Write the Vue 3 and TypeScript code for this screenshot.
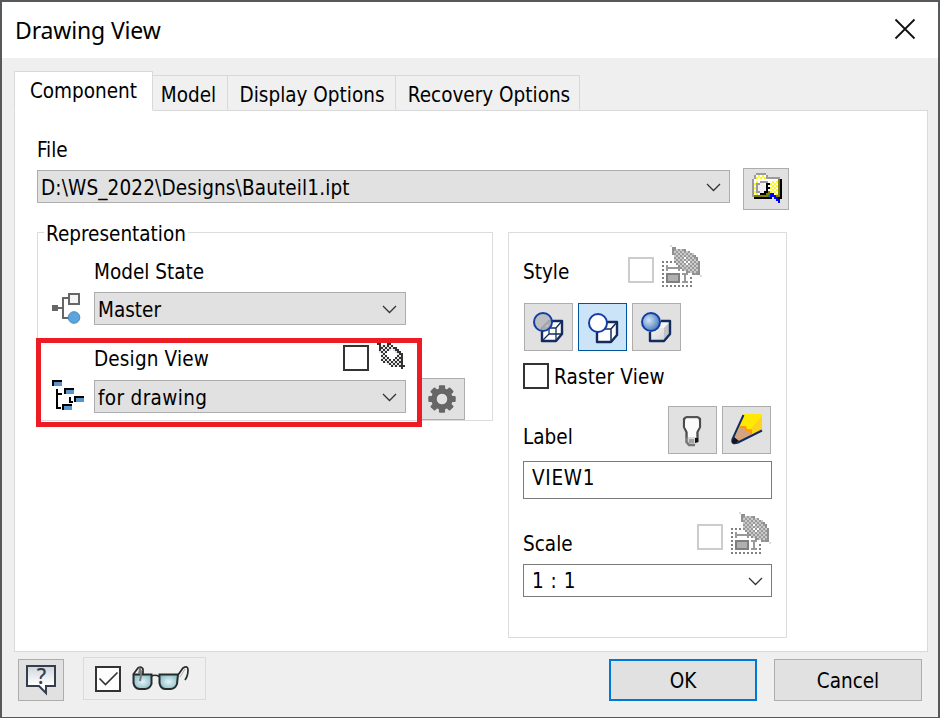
<script setup lang="ts">
import { ref, h, type FunctionalComponent } from 'vue'

const palette: Record<string, string> = {
  g: '#9b9b9b', w: '#ffffff', y: '#ffff00', o: '#808000', k: '#000000',
  b: '#0000ff', t: '#008080', l: '#efefef', d: '#333333', s: '#dddddd', m: '#8f8f8f',
}

// 'x' cells alternate between the two dither colours.
const folderMap = [
  '..ggggg........',
  '.gxxxxxg.......',
  '.gxxxxxggggggg.',
  'gwwwwwwwwwwwwok',
  'gwxwggggwxxxxok',
  'gxggllwkkxxxxok',
  'gwgllllkwxxxxok',
  'gxgllllkkxxxxok',
  'gwgllllkwxxxxok',
  'gxggllkkoxxxxok',
  'gwxwkkkoobbxxok',
  'goooooootbbbook',
  '.kkkkkkkkk.bbkk',
  '............bb.',
  '.............b.',
]

const leafMap = [
  'dd...dd.......',
  '.dxxxxxd......',
  '.dxxxxxxxd....',
  '.xxxxxxwxxd...',
  '.xxxxwwwwxxd..',
  '..xxwwwwwwxxd.',
  '..xxxwwwwwxxd.',
  '..xxxxwwwxxxd.',
  '..xxxxxwxxxxd.',
  '...xxxxxxxxxd.',
  '.....xxxxxxxd.',
  '.......dxdxxdd',
  '............d.',
]

const grayLeafMap = [
  's...............',
  '.mm.............',
  '.mxxxxxm........',
  '.mxxxxxxxx......',
  '.mxxxxxxxxxx....',
  '..xxxxxxxxxxm...',
  '..xxxxxwxxxxxm..',
  '..xxxxxxxxxxxm..',
  '..mxxxxwxwxxxxm.',
  '...mxxxxwxxxxxm.',
  '....mxxxxxxxxxm.',
  '.....mxxxxxxxxm.',
  '......mxxxxxxxm.',
  '........mxxxxxm.',
  '...........mxmm.',
  '...............s',
]

const PixelArt: FunctionalComponent<{ map: string[]; dither: [string, string] }> = (props) =>
  h('g', { 'shape-rendering': 'crispEdges' },
    props.map.flatMap((row, y) =>
      [...row].map((c, x) => c === '.' ? null
        : h('rect', {
            x: x * 2, y: y * 2, width: 2, height: 2,
            fill: c === 'x' ? props.dither[(x + y) % 2] : palette[c],
          }))))
PixelArt.props = ['map', 'dither']

const folderDither: [string, string] = ['#ffff00', '#ffffff']
const leafDither: [string, string] = ['#333333', '#e4e4e4']
const grayLeafDither: [string, string] = ['#9a9a9a', '#cbcbcb']

const Chevron: FunctionalComponent = () =>
  h('svg', { width: 15, height: 9, viewBox: '0 0 15 9' },
    [h('path', { d: 'M1 1 L7.5 7.5 L14 1', fill: 'none', stroke: '#333', 'stroke-width': 1.3 })])

const OverrideIcon: FunctionalComponent = () =>
  h('svg', { width: 42, height: 44, viewBox: '0 0 42 44' }, [
    h('g', { fill: 'none', stroke: '#808080', 'stroke-width': 2, 'shape-rendering': 'crispEdges' }, [
      h('path', { d: 'M0 17 H14 M0 41 H32', 'stroke-dasharray': '2 2' }),
      h('path', { d: 'M1 20 V42 M29 32 V42', 'stroke-dasharray': '2 2' }),
      h('rect', { x: 5, y: 29, width: 12, height: 8, fill: '#b0b0b0' }),
      h('path', { d: 'M5 20 V26 M17 20 V26 M6 23 H16 M20 29 H26 M20 37 H26 M23 30 V36', stroke: '#999' }),
    ]),
    h('g', { transform: 'translate(8 0)' }, [h(PixelArt, { map: grayLeafMap, dither: grayLeafDither })]),
  ])

const tabs = ['Component', 'Model', 'Display Options', 'Recovery Options']
const active = ref(0)
const style = ref(1)
const previewOn = ref(true)
const rasterOn = ref(false)
const label = ref('VIEW1')
</script>

<template>
  <div class="dialog">
    <header class="titlebar">
      <h1>Drawing View</h1>
      <button class="close" aria-label="Close">
        <svg width="22" height="22" viewBox="0 0 22 22"><path d="M1.5 1.5 L20.5 20.5 M20.5 1.5 L1.5 20.5" stroke="#111" stroke-width="1.8" /></svg>
      </button>
    </header>

    <nav class="tabs">
      <button v-for="(t, i) in tabs" :key="t" :class="['tab', 'tab-' + i, { active: i === active }]" @click="active = i"><span>{{ t }}</span></button>
    </nav>

    <main class="panel">
      <div class="caption file-caption">File</div>
      <div class="file-row">
        <div class="combo file-combo"><span class="path">D:\WS_2022\Designs\Bauteil1.ipt</span><Chevron /></div>
        <button class="btn small">
          <svg class="folder" width="30" height="30" viewBox="0 0 30 30"><PixelArt :map="folderMap" :dither="folderDither" /></svg>
        </button>
      </div>

      <div class="groups">
        <section class="group representation">
          <div class="legend">Representation</div>
          <div class="caption state-caption">Model State</div>
          <div class="rep-row">
            <svg class="rep-icon" width="34" height="34" viewBox="0 0 34 34">
              <rect x="0" y="13" width="6" height="6" fill="#666" />
              <path d="M6 16 H11 M17 6 H11 V26 H17" fill="none" stroke="#666" stroke-width="2" />
              <rect x="17" y="2" width="10" height="10" fill="#f5f5f5" stroke="#666" stroke-width="2" />
              <circle cx="22" cy="25.500" r="5.800" fill="#5ba5dc" stroke="#4489bd" stroke-width="1" />
            </svg>
            <div class="combo rep-combo"><span>Master</span><Chevron /></div>
          </div>
          <div class="design-head">
            <span class="caption design-caption">Design View</span>
            <span class="check" />
            <svg class="leaf" width="28" height="26" viewBox="0 0 28 26"><PixelArt :map="leafMap" :dither="leafDither" /></svg>
          </div>
          <div class="rep-row design-row">
            <svg class="rep-icon tree" width="34" height="34" viewBox="0 0 34 34">
              <path d="M5 9 V28 H9 M5 14 H10 M18 17 V22 H21" fill="none" stroke="#000" stroke-width="2" />
              <g fill="#5b94cc">
                <rect x="1" y="2" width="9" height="4" /><rect x="13" y="10" width="9" height="4" />
                <rect x="23" y="18" width="9" height="4" /><rect x="11" y="26" width="9" height="4" />
              </g>
              <path d="M1 6 V1 H10 M13 14 V9 H22 M23 22 V17 H32 M11 30 V25 H20" fill="none" stroke="#000" stroke-width="2" />
            </svg>
            <div class="combo rep-combo"><span class="design-value">for drawing</span><Chevron /></div>
            <button class="btn small gear">
              <svg width="30" height="30" viewBox="-15 -15 30 30">
                <g fill="#666">
                  <rect v-for="n in 8" :key="n" x="-3.100" y="-13.700" width="6.200" height="7" rx="1" :transform="`rotate(${n * 45})`" />
                </g>
                <circle r="8" fill="#e1e1e1" stroke="#666" stroke-width="5.500" />
                <circle r="5" fill="#e1e1e1" />
              </svg>
            </button>
          </div>
          <div class="highlight" />
        </section>

        <section class="group view">
          <div class="view-row style-head">
            <span class="caption">Style</span>
            <span class="check disabled" />
            <OverrideIcon class="override" />
          </div>
          <div class="style-buttons">
            <button :class="['btn', 'tool', { selected: style === 0 }]" @click="style = 0">
              <svg width="47" height="46" viewBox="0 0 47 46" fill="none">
                <path d="M17 24 L24 17 H37 V30 L31 37 H17 Z" fill="#fff" stroke="#132b5e" stroke-width="2.400" stroke-linejoin="round" />
                <path d="M17 24 H31 V37 M31 24 L37 17 M24 17 V30 H37 M24 30 L17 37" stroke="#132b5e" stroke-width="1.300" />
                <circle cx="18" cy="18" r="9" fill="#b6b8ba" fill-opacity=".88" stroke="#143da6" stroke-width="2" />
              </svg>
            </button>
            <button :class="['btn', 'tool', { selected: style === 1 }]" @click="style = 1">
              <svg width="47" height="46" viewBox="0 0 47 46" fill="none">
                <path d="M18 25 L25 18 H38 V31 L32 38 H18 Z" fill="#fff" stroke="#132b5e" stroke-width="2.400" stroke-linejoin="round" />
                <path d="M18 25 H32 V38 M32 25 L38 18" stroke="#132b5e" stroke-width="1.500" />
                <circle cx="19" cy="19" r="9" fill="#fff" stroke="#143da6" stroke-width="2" />
              </svg>
            </button>
            <button :class="['btn', 'tool', { selected: style === 2 }]" @click="style = 2">
              <svg width="47" height="46" viewBox="0 0 47 46" fill="none">
                <defs>
                  <radialGradient id="ball" cx=".38" cy=".4" r=".65"><stop offset="0" stop-color="#d3e5f6" /><stop offset="1" stop-color="#4578b8" /></radialGradient>
                  <linearGradient id="face" x1="0" y1="0" x2="1" y2="1"><stop offset="0" stop-color="#fff" /><stop offset="1" stop-color="#ccc" /></linearGradient>
                </defs>
                <path d="M17 24 L24 17 H37 V30 L31 37 H17 Z" fill="url(#face)" />
                <path d="M17 24 L24 17 H37 L31 24 Z" fill="#f7f7f7" />
                <path d="M31 24 L37 18 V30 L31 36 Z" fill="#c0c3c7" />
                <path d="M17 28 V37 H31 L37 30 V17 H28" stroke="#132b5e" stroke-width="2.400" stroke-linejoin="round" />
                <circle cx="18" cy="18" r="9" fill="url(#ball)" stroke="#143da6" stroke-width="2" />
              </svg>
            </button>
          </div>
          <label class="raster" @click="rasterOn = !rasterOn">
            <span class="check"><svg v-if="rasterOn" width="22" height="22" viewBox="0 0 22 22"><path d="M3 11 L9 17 L20 5" fill="none" stroke="#333" stroke-width="1.800" /></svg></span>
            <span class="raster-text">Raster View</span>
          </label>
          <div class="label-row">
            <span class="caption">Label</span>
            <button class="btn tool">
              <svg width="47" height="46" viewBox="0 0 47 46">
                <path d="M17 9 H29 L32 12 V21 L29 25 V35 L27 38 H19 L16 34 V25 L14 21 V12 Z" fill="#d8d8d8" />
                <path d="M17 10 H29" fill="none" stroke="#555" stroke-width="2" />
                <path d="M17 10 L15 12 V20 L17.500 25 V31 M29 10 L31 12 V20 L28.500 25 V31" fill="none" stroke="#4c4c4c" stroke-width="2.200" />
                <path d="M17 12 H29 L30 15 V20 L27 25 V30 H19 V25 L16 20 V15 Z" fill="#fbfbfb" />
                <path d="M17.500 30 V35 L20 38 H26" fill="none" stroke="#777" stroke-width="2.500" />
                <path d="M26 31 H29.500 V35 L26 36 Z" fill="#111" />
                <path d="M20 32 H25 V36 H20 Z" fill="#a2a2a2" />
              </svg>
            </button>
            <button class="btn tool pencil">
              <svg width="47" height="46" viewBox="0 0 47 46">
                <path d="M21 7 L39 7 V23 L26 29 L15 22 Z" fill="#ffe900" />
                <path d="M39 9 V23 L27 28 L26 24 Z" fill="#ffd21f" />
                <path d="M16.500 20 L22 20 L24 23 L28 24 L28 28 L15 35 L11 31 Z" fill="#d6a37f" />
                <path d="M17 20 L22 20 L23.500 23 L28 23.500 V27" fill="none" stroke="#ff9b00" stroke-width="2" />
                <path d="M20.500 8 L9.500 32 Q8 38 15 35.500 L39 23.500" fill="none" stroke="#132b5e" stroke-width="2" />
                <path d="M11 30 L16 34 L11 36.500 L9 35 Z" fill="#151515" />
              </svg>
            </button>
          </div>
          <input v-model="label" class="name-input" />
          <div class="view-row scale-head">
            <span class="caption">Scale</span>
            <span class="check disabled" />
            <OverrideIcon class="override" />
          </div>
          <div class="combo scale-combo"><span>1 : 1</span><Chevron /></div>
        </section>
      </div>
    </main>

    <footer class="footer">
      <button class="btn small help">
        <svg width="34" height="40" viewBox="0 -3 34 40">
          <defs><linearGradient id="bubble" x1="0" y1="0" x2="0" y2="1"><stop offset="0" stop-color="#cfd4da" /><stop offset=".7" stop-color="#fff" /></linearGradient></defs>
          <path d="M3 3 H31 V23 H22 V30 L15 23 H3 Z" fill="url(#bubble)" stroke="#353e4c" stroke-width="2" />
          <text x="17.500" y="20.500" text-anchor="middle" class="question">?</text>
        </svg>
      </button>
      <div class="preview" @click="previewOn = !previewOn">
        <span class="check"><svg v-if="previewOn" width="22" height="22" viewBox="0 0 22 22"><path d="M2.500 10.500 L8.500 16.500 L20.500 4.500" fill="none" stroke="#333" stroke-width="1.600" /></svg></span>
        <svg class="glasses" width="60" height="28" viewBox="0 0 60 28">
          <defs><radialGradient id="lens"><stop offset="0" stop-color="#e4f5f7" /><stop offset="1" stop-color="#93c2ca" /></radialGradient></defs>
          <g fill="none" stroke="#262b2c" stroke-width="2">
            <path d="M2.500 9.500 H20.500 V19 Q18.500 24 14 24 H8.500 Q3.500 23.500 2.500 18 Z" fill="url(#lens)" />
            <path d="M28.500 9.500 H47 L46 19 Q44 24 39.500 24 H34 Q29.500 23.500 28.500 18 Z" fill="url(#lens)" />
            <path d="M20 11.500 Q24 9 28 11.500 M2.500 9 L7 3 Q10 1 12 4 V9 M47 10 L52 3 Q57 0 57 5 Q57 11 54 15" stroke-width="1.700" />
          </g>
          <path d="M8 9 L9 4 Q11 7 9 16" fill="none" stroke="#777" stroke-width="2" />
          <path d="M49 12 L54 4" stroke="#aaa" stroke-width="1" />
        </svg>
      </div>
      <button class="btn action ok"><span>OK</span></button>
      <button class="btn action cancel"><span>Cancel</span></button>
    </footer>
  </div>
</template>

<style>
body { margin: 0; overflow: hidden; }
</style>

<style scoped>
* { box-sizing: border-box; }
.dialog {
  display: flex; flex-direction: column; width: 940px; height: 718px;
  border: 2px solid #56595c; border-bottom-width: 1px; background: #efefef; color: #000;
  font-family: 'DejaVu Sans Condensed', 'DejaVu Sans', sans-serif; font-stretch: condensed;
  font-size: 20.5px; line-height: 26px; white-space: nowrap; letter-spacing: 0;
}
button, input { font: inherit; color: inherit; letter-spacing: inherit; margin: 0; padding: 0; border-radius: 0; }
svg { display: block; flex: none; }
.titlebar { display: flex; align-items: center; justify-content: space-between; height: 56px; padding: 0 22px 2px 13px; background: #fff; }
h1 { margin: 2px 0 0; font: 400 23px/30px 'Noto Sans', sans-serif; letter-spacing: -.15px; }
.close { border: 0; background: none; }
.tabs { display: flex; align-items: flex-end; height: 53px; padding-left: 12px; position: relative; z-index: 1; margin-bottom: -1px; }
.tab { height: 36px; padding-top: 4px; border: 1px solid #d9d9d9; border-left: 0; background: #f0f0f0; text-align: center; }
.tab.active { height: 40px; padding-top: 0; border: 1px solid #d9d9d9; border-bottom-color: #fff; background: #fff; }
.tab-0 { width: 139px; }
.tab-1 { width: 75px; padding-right: 3px; }
.tab-2 { width: 168px; padding-left: 1px; }
.tab-3 { width: 184px; padding-left: 3px; }
.panel { width: 914px; height: 542px; margin-left: 12px; padding: 26px 0 0 22px; border: 1px solid #d9d9d9; background: #fff; flex: none; }
.file-caption { height: 31px; }
.file-row { display: flex; align-items: center; gap: 13px; height: 42px; }
.combo { display: flex; align-items: center; justify-content: space-between; height: 33px; padding: 0 8px 0 3px; border: 1px solid #adadad; background: #e1e1e1; }
.combo > span { margin-top: 2px; }
.combo > svg { margin-top: 1px; }
.file-combo { width: 693px; margin-top: -5px; }
.path { letter-spacing: .13px; }
.btn { display: grid; place-items: center; border: 1px solid #adadad; background: #e1e1e1; flex: none; }
.small { width: 46px; height: 42px; }
.folder { margin: -2px 0 0 2px; }
.groups { display: flex; gap: 15px; margin-top: 22px; align-items: flex-start; }
.group { border: 1px solid #dcdcdc; }
.representation { position: relative; width: 456px; height: 189px; }
.legend { width: 144px; height: 26px; margin: -12px 0 0 6px; padding-left: 2px; background: #fff; }
.state-caption { margin: 12px 0 7px 56px; }
.rep-row { display: flex; align-items: center; height: 33px; padding-left: 14px; }
.rep-icon { margin-right: 8px; }
.rep-combo { width: 312px; }
.design-head { display: flex; align-items: center; height: 26px; margin: 20px 0 9px 56px; }
.design-caption { margin-top: 2px; letter-spacing: .15px; }
.design-value { letter-spacing: .35px; }
.design-head .check { margin-left: auto; }
.design-head .leaf { margin: -4px 87px 0 8px; }
.design-row .gear { margin-left: 13px; margin-top: 5px; }
.highlight { position: absolute; left: -2px; top: 105px; width: 386px; height: 89px; border: 5px solid #ed1c24; }
.check { display: inline-block; width: 26px; height: 26px; border: 2px solid #333; background: #fff; flex: none; }
.check.disabled { border-color: #ccc; }
.view { width: 279px; height: 406px; padding-left: 14px; }
.view-row { display: flex; align-items: center; }
.view-row .check { margin-left: auto; }
.view-row .override { margin-left: 8px; }
.style-head { height: 44px; margin-top: 12px; padding-right: 82px; }
.style-head .caption { margin-top: 10px; }
.style-head .check { margin-top: 6px; }
.style-buttons { display: flex; gap: 5px; margin: 14px 0 12px 1px; }
.tool { width: 49px; height: 48px; }
.tool.selected { border-color: #005499; background: #cce4f7; }
.raster { display: flex; align-items: center; gap: 5px; height: 26px; }
.raster-text { margin-top: 2px; letter-spacing: .15px; }
.label-row { display: flex; gap: 5px; align-items: center; height: 48px; margin: 17px 15px 7px 0; }
.label-row .caption { margin-right: auto; margin-top: 14px; }
.name-input { display: block; width: 249px; height: 38px; padding: 0 8px 4px; border: 1px solid #7a7a7a; background: #fff; outline: 0; letter-spacing: .7px; }
.scale-head { height: 44px; margin-top: 13px; padding-right: 13px; }
.scale-head .caption { margin-top: 20px; }
.scale-head .check { margin-top: 6px; }
.scale-combo { width: 249px; margin-top: 8px; padding-left: 8px; border-color: #7a7a7a; background: #fff; }
.scale-combo > span { margin-top: 0; letter-spacing: .5px; }
.footer { display: flex; align-items: flex-start; padding: 7px 16px 0; }
.footer > .small { align-self: flex-start; }
.question { font: 500 21px 'Noto Sans', sans-serif; fill: #353e4c; }
.preview { display: flex; align-items: center; width: 123px; height: 43px; margin: -2px 0 0 19px; padding-left: 11px; border: 1px solid #dadada; }
.glasses { margin-left: 10px; }
.action { width: 148px; height: 42px; }
.action > span { margin-top: 2px; }
.ok { margin-left: auto; border: 2px solid #0078d7; }
.cancel { margin-left: 17px; }
</style>
